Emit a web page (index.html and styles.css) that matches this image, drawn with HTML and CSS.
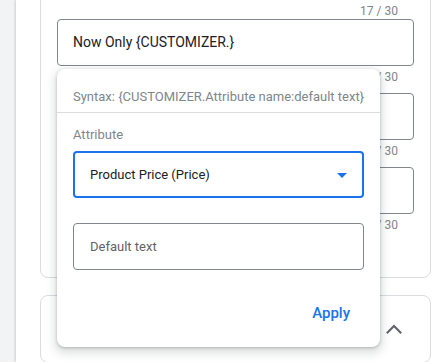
FILE: index.html
```html
<!DOCTYPE html>
<html lang="en">
  <head>
    <meta charset="UTF-8" />
    <meta name="viewport" content="width=device-width, initial-scale=1.0" />
    <title>Headlines</title>
    <link rel="stylesheet" href="styles.css">
  </head>
  <body>
    <div class="panel">
      <div class="card fields">
        <div class="counter first">17 / 30</div>

        <div class="field">
          <div class="text-input">Now Only {CUSTOMIZER.}</div>
          <div class="counter">17 / 30</div>
        </div>

        <div class="field">
          <div class="text-input"></div>
          <div class="counter">17 / 30</div>
        </div>

        <div class="field">
          <div class="text-input"></div>
          <div class="counter">17 / 30</div>
        </div>

        <div class="add-link">
          <svg width="14" height="14" viewBox="0 0 14 14">
            <path d="M6 1h2v5h5v2H8v5H6V8H1V6h5z" fill="#1a73e8" />
          </svg>
        </div>
      </div>

      <div class="card section">
        <div class="section-title">Descriptions</div>
        <svg class="chevron" width="24" height="24" viewBox="0 0 24 24">
          <polyline points="4.8,16.2 12,9 19.2,16.2" fill="none" stroke="#5f6368" stroke-width="2" />
        </svg>
      </div>

      <div class="popup">
        <div class="popup-hint">Syntax: {CUSTOMIZER.Attribute name:default text}</div>
        <div class="popup-body">
          <div class="popup-label">Attribute</div>
          <div class="select">
            <span>Product Price (Price)</span>
            <span class="arrow"></span>
          </div>
          <div class="default-input">Default text</div>
        </div>
        <div class="popup-actions">
          <button type="button">Apply</button>
        </div>
      </div>
    </div>
  </body>
</html>
```

FILE: styles.css
```css
body {
  margin: 0;
  background-color: #f1f3f4;
  font-family: Roboto, "Liberation Sans", Arial, sans-serif;
  color: #202124;
  overflow: hidden;
}
.panel {
  position: relative;
  display: flow-root;
  margin-left: 16px;
  height: 362px;
  background-color: #fff;
  box-shadow: -1px 0 2px rgba(60, 64, 67, 0.2);
  padding: 0 17px 0 24px;
}
.card {
  border: 1px solid #dadce0;
  border-radius: 8px;
  background-color: #fff;
}
.fields {
  margin-top: -10px;
  padding: 12px 16px 22px 16px;
}
.counter {
  margin-top: 3px;
  margin-bottom: 8px;
  height: 16px;
  line-height: 16px;
  font-size: 12px;
  color: #80868b;
  text-align: right;
  padding-right: 16px;
}
.counter.first {
  margin: 0;
}
.text-input {
  box-sizing: border-box;
  height: 47px;
  border: 1px solid #80868b;
  border-radius: 4px;
  padding: 0 15px;
  font-size: 14px;
  line-height: 45px;
  color: #202124;
}
.add-link {
  display: flex;
  margin-top: 7px;
  margin-left: -1px;
  height: 14px;
}
.section {
  margin-top: 17px;
  height: 66px;
  display: flex;
  align-items: center;
  justify-content: space-between;
  padding: 0 24px;
}
.section-title {
  font-size: 16px;
  color: #202124;
}
.popup {
  position: absolute;
  left: 41px;
  top: 69px;
  width: 323px;
  height: 278px;
  box-sizing: border-box;
  background-color: #fff;
  border-radius: 8px;
  box-shadow: 0 1px 3px rgba(60, 64, 67, 0.3), 0 4px 8px 3px rgba(60, 64, 67, 0.15);
}
.popup-hint {
  padding: 18px 16px 5px 16px;
  font-size: 13px;
  line-height: 20px;
  color: #80868b;
  border-bottom: 1px solid #dadce0;
  white-space: nowrap;
}
.popup-body {
  padding: 12px 16px 0 16px;
}
.popup-label {
  font-size: 13px;
  line-height: 20px;
  color: #80868b;
}
.select {
  box-sizing: border-box;
  margin-top: 6px;
  height: 47px;
  border: 2px solid #1a73e8;
  border-radius: 4px;
  padding: 0 15px;
  display: flex;
  align-items: center;
  justify-content: space-between;
  font-size: 13px;
  color: #202124;
}
.arrow {
  width: 0;
  height: 0;
  border-left: 5px solid transparent;
  border-right: 5px solid transparent;
  border-top: 5px solid #1a73e8;
  margin-top: 2px;
}
.default-input {
  box-sizing: border-box;
  margin-top: 25px;
  height: 47px;
  border: 1px solid #80868b;
  border-radius: 4px;
  padding: 0 16px;
  font-size: 13px;
  line-height: 45px;
  color: #5f6368;
}
.popup-actions {
  display: flex;
  justify-content: flex-end;
  padding: 25px 22px 0 0;
}
.popup-actions button {
  height: 36px;
  padding: 0 8px;
  border: none;
  background: none;
  font-family: inherit;
  font-size: 15px;
  font-weight: 500;
  color: #1a73e8;
  cursor: pointer;
}
```
